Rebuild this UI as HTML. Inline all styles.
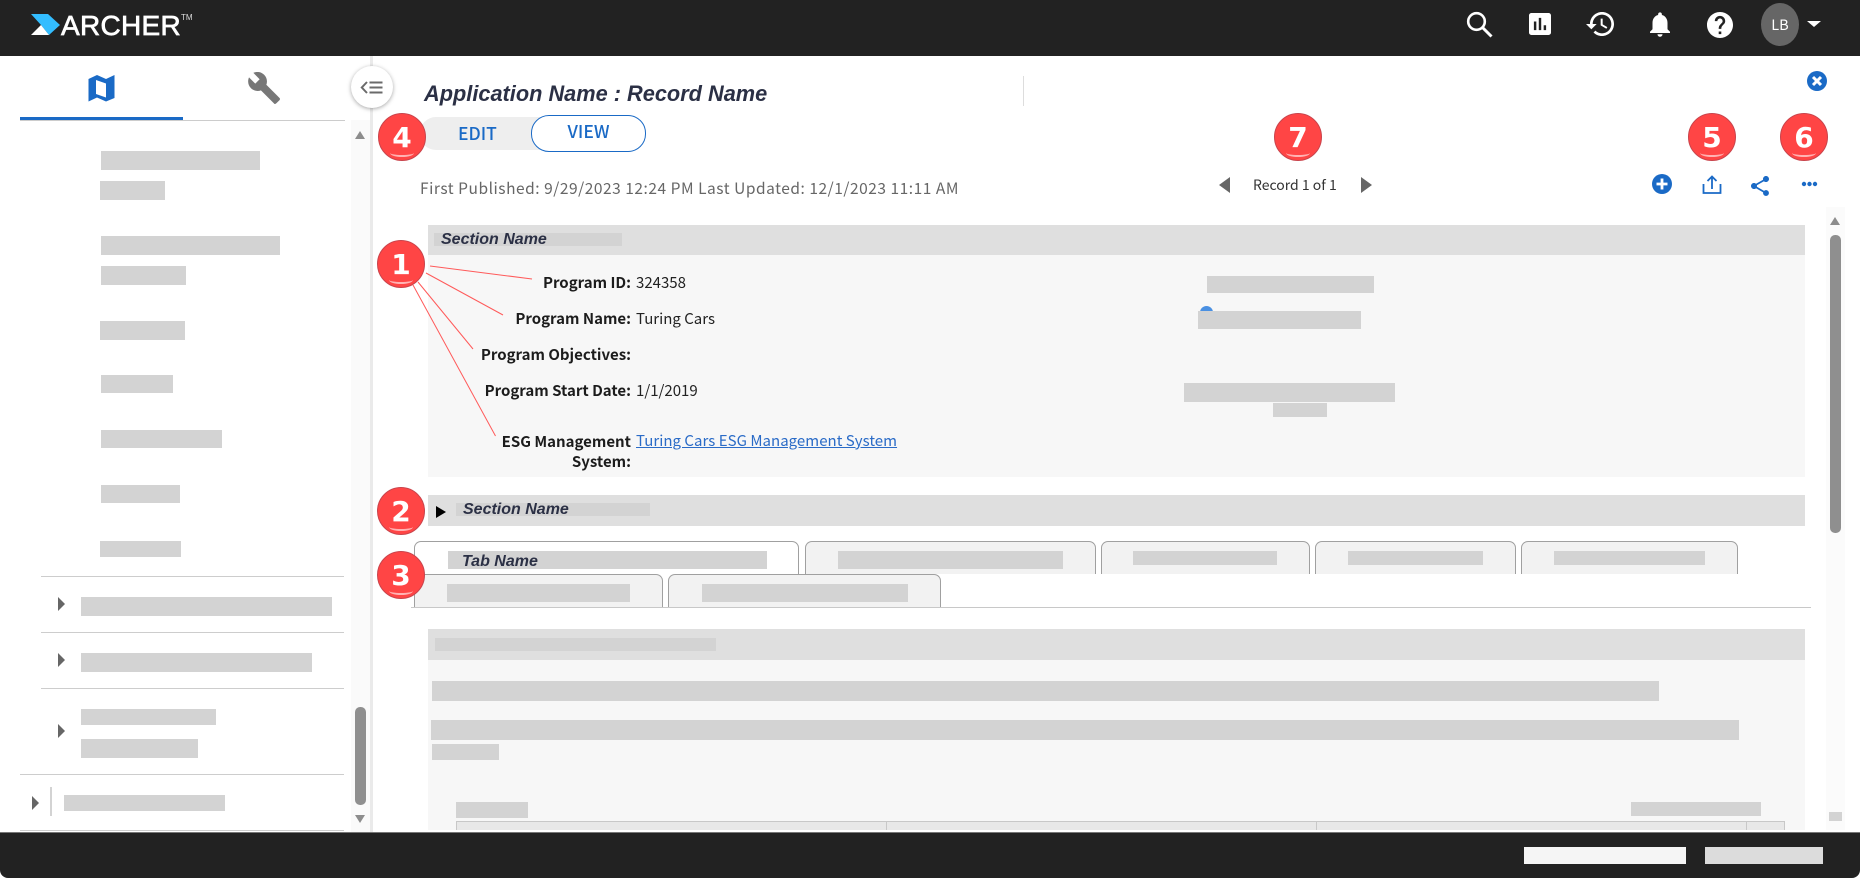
<!DOCTYPE html>
<html lang="en"><head><meta charset="utf-8"><title>Archer Record</title>
<style>
html,body{margin:0;padding:0;width:1860px;height:878px;overflow:hidden;background:#fff}
body{position:relative;font-family:"Noto Sans CJK JP","Liberation Sans",sans-serif}
div,svg,span,a{position:absolute;box-sizing:border-box}
.b{background:#d3d3d3}
.l{background:#cdcdcd;height:1px}
.sec{background:#dfdfdf;left:428px;width:1377px}
.body{background:#f7f7f7;left:428px;width:1377px}
.h{font:italic bold 16px/18px "Liberation Sans",sans-serif;color:#2b3045;white-space:nowrap}
.tab{background:#f2f2f2;border:1px solid #a0a0a0;border-bottom:0;border-radius:7px 7px 0 0}
.lab{font-weight:700;font-size:15px;line-height:20px;color:#1c1c1c;text-align:right;white-space:nowrap;right:1229px}
.val{font-size:15px;line-height:20px;color:#222;left:636px;white-space:nowrap}
.bd{width:48px;height:48px;border-radius:50%;background:#ff4545;border:1px solid #c9444c;color:#fff;font:bold 28px/48px "DejaVu Sans",sans-serif;text-align:center;overflow:hidden}
.bd:after{content:"";position:absolute;left:11px;right:11px;bottom:3px;height:6px;border-bottom:2px solid #ffb3b3;border-radius:0 0 50% 50%}
.tri{width:0;height:0}
</style></head><body>

<!-- header -->
<div style="left:0;top:0;width:1860px;height:56px;background:#222"></div>
<svg style="left:31px;top:14px" width="30" height="22" viewBox="0 0 30 22"><polygon points="0,0 17,0 29,11 18,21 10,11" fill="#33bdff"/><polygon points="10,11 18,21 0,21" fill="#fff"/></svg>
<span style="left:61px;top:10px;font:28px/32px 'Liberation Sans',sans-serif;color:#fff;white-space:nowrap;-webkit-text-stroke:.7px #fff;letter-spacing:.3px">ARCHER</span>
<span style="left:181px;top:13px;font:8px/10px 'Liberation Sans',sans-serif;color:#ddd">TM</span>

<svg style="left:1466px;top:11px" width="27" height="27" viewBox="0 0 27 27" fill="none" stroke="#fff"><circle cx="10.5" cy="10.5" r="8.3" stroke-width="2.6"/><path d="M16.5 16.5L25.5 25.5" stroke-width="3"/></svg>
<svg style="left:1529px;top:13px" width="22" height="22" viewBox="3 3 18 18" fill="#fff"><path d="M19 3H5c-1.1 0-2 .9-2 2v14c0 1.1.9 2 2 2h14c1.1 0 2-.9 2-2V5c0-1.1-.9-2-2-2zM9 17H7v-7h2v7zm4 0h-2V7h2v10zm4 0h-2v-4h2v4z"/></svg>
<svg style="left:1586px;top:11px" width="28" height="26" viewBox="1 3 21 18" fill="#fff"><path d="M13 3c-4.97 0-9 4.03-9 9H1l3.89 3.89.07.14L9 12H6c0-3.87 3.13-7 7-7s7 3.13 7 7-3.13 7-7 7c-1.93 0-3.68-.79-4.94-2.06l-1.42 1.42C8.27 19.99 10.51 21 13 21c4.97 0 9-4.03 9-9s-4.03-9-9-9zm-1 5v5l4.28 2.54.72-1.21-3.5-2.08V8H12z"/></svg>
<svg style="left:1650px;top:12px" width="20" height="25" viewBox="4 2.5 16 19.5" fill="#fff"><path d="M12 22c1.1 0 2-.9 2-2h-4c0 1.1.89 2 2 2zm6-6v-5c0-3.07-1.64-5.64-4.5-6.32V4c0-.83-.67-1.5-1.5-1.5s-1.5.67-1.5 1.5v.68C7.63 5.36 6 7.92 6 11v5l-2 2v1h16v-1l-2-2z"/></svg>
<svg style="left:1707px;top:12px" width="26" height="26" viewBox="2 2 20 20" fill="#fff"><path d="M12 2C6.48 2 2 6.48 2 12s4.48 10 10 10 10-4.48 10-10S17.52 2 12 2zm1 17h-2v-2h2v2zm2.07-7.75l-.9.92C13.45 12.9 13 13.5 13 15h-2v-.5c0-1.1.45-2.1 1.17-2.83l1.24-1.26c.37-.36.59-.86.59-1.41 0-1.1-.9-2-2-2s-2 .9-2 2H8c0-2.21 1.79-4 4-4s4 1.79 4 4c0 .88-.36 1.68-.93 2.25z"/></svg>
<div style="left:1761px;top:3px;width:38px;height:43px;border-radius:19px/21.5px;background:#666;color:#fff;font-size:14.5px;line-height:43px;text-align:center">LB</div>
<div class="tri" style="left:1807px;top:21px;border-left:7px solid transparent;border-right:7px solid transparent;border-top:6px solid #fff"></div>

<!-- sidebar -->
<div style="left:351px;top:120px;width:19px;height:713px;background:#fafafa"></div>
<div style="left:370px;top:56px;width:3px;height:777px;background:#eaeaea"></div>
<svg style="left:88px;top:74px" width="27" height="28" viewBox="0 0 27 28" fill="#1a6ac6"><path fill-rule="evenodd" d="M.5 5L9 1l9 4 8.5-4v23L18 27.500l-9-4-8.500 4zM8 6v14l10 3.500V9.500z"/></svg>
<svg style="left:248px;top:72px" width="32" height="32" viewBox="1 1 22 22" fill="#777"><path transform="matrix(-1 0 0 1 24 0) rotate(90 12 12)" d="M22.700 19l-9.100-9.100c.9-2.300.4-5-1.500-6.900-2-2-5-2.400-7.400-1.300L9 6 6 9 1.600 4.700C.4 7.100.9 10.100 2.900 12.100c1.900 1.900 4.600 2.400 6.900 1.500l9.100 9.100c.4.4 1 .4 1.400 0l2.300-2.300c.5-.4.5-1.100.1-1.400z"/></svg>
<div style="left:20px;top:120px;width:325px;height:1px;background:#ccc"></div>
<div style="left:20px;top:117px;width:163px;height:3px;background:#1a6ac6"></div>

<div class="tri" style="left:355px;top:131px;border-left:5.500px solid transparent;border-right:5.500px solid transparent;border-bottom:8px solid #8d8d8d"></div>
<div class="tri" style="left:355px;top:815px;border-left:5.500px solid transparent;border-right:5.500px solid transparent;border-top:8px solid #8d8d8d"></div>
<div style="left:355px;top:707px;width:11px;height:98px;border-radius:5px;background:#8f8f8f"></div>

<div class="b" style="left:101px;top:151px;width:159px;height:19px"></div>
<div class="b" style="left:100px;top:181px;width:65px;height:19px"></div>
<div class="b" style="left:101px;top:236px;width:179px;height:19px"></div>
<div class="b" style="left:101px;top:266px;width:85px;height:19px"></div>
<div class="b" style="left:100px;top:321px;width:85px;height:19px"></div>
<div class="b" style="left:101px;top:375px;width:72px;height:18px"></div>
<div class="b" style="left:101px;top:430px;width:121px;height:18px"></div>
<div class="b" style="left:101px;top:485px;width:79px;height:18px"></div>
<div class="b" style="left:100px;top:541px;width:81px;height:16px"></div>
<div class="l" style="left:41px;top:576px;width:303px"></div>
<div class="l" style="left:41px;top:632px;width:303px"></div>
<div class="l" style="left:41px;top:688px;width:303px"></div>
<div class="l" style="left:20px;top:774px;width:324px"></div>
<div class="l" style="left:20px;top:830px;width:324px"></div>
<div class="b" style="left:81px;top:597px;width:251px;height:19px"></div>
<div class="b" style="left:81px;top:653px;width:231px;height:19px"></div>
<div class="b" style="left:81px;top:709px;width:135px;height:16px"></div>
<div class="b" style="left:81px;top:739px;width:117px;height:19px"></div>
<div class="b" style="left:64px;top:795px;width:161px;height:16px"></div>
<div style="left:50px;top:787px;width:2px;height:29px;background:#d3d3d3"></div>
<div class="tri" style="left:58px;top:597px;border-top:7px solid transparent;border-bottom:7px solid transparent;border-left:7px solid #666"></div>
<div class="tri" style="left:58px;top:653px;border-top:7px solid transparent;border-bottom:7px solid transparent;border-left:7px solid #666"></div>
<div class="tri" style="left:58px;top:724px;border-top:7px solid transparent;border-bottom:7px solid transparent;border-left:7px solid #666"></div>
<div class="tri" style="left:32px;top:796px;border-top:7px solid transparent;border-bottom:7px solid transparent;border-left:7px solid #666"></div>

<!-- toggle -->
<div style="left:351px;top:66px;width:42px;height:42px;border-radius:50%;background:#fff;box-shadow:0 1px 4px rgba(0,0,0,.35)"></div>
<svg style="left:360px;top:80px" width="24" height="15" viewBox="0 0 24 15" fill="none" stroke="#6a6a6a" stroke-width="2"><path d="M7 2L1.800 7.500L7 13"/><path d="M9.500 2.500h13M9.500 7.500h13M9.500 12.500h13"/></svg>

<!-- title row -->
<span style="left:424px;top:81px;font:italic bold 21.750px/26px 'Liberation Sans',sans-serif;color:#2b3045;white-space:nowrap">Application Name : Record Name</span>
<div style="left:1023px;top:76px;width:1px;height:30px;background:#ddd"></div>
<svg style="left:1807px;top:71px" width="20" height="20" viewBox="0 0 20 20"><circle cx="10" cy="10" r="10" fill="#1a6ac6"/><path d="M6 6l8 8M14 6l-8 8" stroke="#fff" stroke-width="3"/></svg>

<div style="left:420px;top:117px;width:130px;height:33px;background:#eee;border-radius:16px 0 0 16px"></div>
<span style="left:458px;top:122px;font-size:17.500px;font-weight:500;line-height:24px;color:#1a6ac6">EDIT</span>
<div style="left:531px;top:115px;width:115px;height:37px;border:1.500px solid #1a6ac6;border-radius:18px;background:#fff;color:#1a6ac6;font-size:17.500px;font-weight:500;line-height:32px;text-align:center">VIEW</div>

<span style="left:420px;top:177px;font-size:15.500px;line-height:22px;color:#666;white-space:nowrap;letter-spacing:.53px">First Published: 9/29/2023 12:24 PM Last Updated: 12/1/2023 11:11 AM</span>

<div class="tri" style="left:1219px;top:177px;border-top:8px solid transparent;border-bottom:8px solid transparent;border-right:11px solid #666"></div>
<span style="left:1253px;top:175px;font-size:14px;line-height:20px;color:#333;white-space:nowrap">Record 1 of 1</span>
<div class="tri" style="left:1361px;top:177px;border-top:8px solid transparent;border-bottom:8px solid transparent;border-left:11px solid #666"></div>

<svg style="left:1652px;top:174px" width="20" height="20" viewBox="0 0 20 20"><circle cx="10" cy="10" r="10" fill="#1a6ac6"/><path d="M10 4.500v11M4.500 10h11" stroke="#fff" stroke-width="2.800"/></svg>
<svg style="left:1702px;top:175px" width="20" height="19" viewBox="0 0 20 19" fill="none" stroke="#1a6ac6" stroke-width="1.800"><path d="M1.500 9v9h17V9"/><path d="M10 14V1.500M5.500 6L10 1.500L14.500 6"/></svg>
<svg style="left:1750px;top:176px" width="20" height="20" viewBox="3 2 18 20" fill="#1a6ac6"><path d="M18 16.080c-.76 0-1.440.3-1.960.77L8.910 12.700c.05-.23.09-.46.09-.7s-.04-.47-.09-.7l7.050-4.110c.54.5 1.250.81 2.040.81 1.660 0 3-1.340 3-3s-1.340-3-3-3-3 1.340-3 3c0 .24.04.47.09.7L8.040 9.810C7.500 9.310 6.790 9 6 9c-1.660 0-3 1.340-3 3s1.340 3 3 3c.79 0 1.500-.31 2.040-.81l7.120 4.160c-.05.21-.08.43-.08.65 0 1.610 1.310 2.920 2.920 2.920s2.920-1.310 2.920-2.920-1.310-2.920-2.920-2.920z"/></svg>
<svg style="left:1801px;top:181px" width="17" height="6" viewBox="0 0 17 6" fill="#1a6ac6"><circle cx="3" cy="3" r="2.200"/><circle cx="8.500" cy="3" r="2.200"/><circle cx="14" cy="3" r="2.200"/></svg>

<!-- section 1 -->
<div class="sec" style="top:225px;height:30px"></div>
<div class="b" style="left:434px;top:233px;width:188px;height:13px"></div>
<span class="h" style="left:441px;top:231px">Section Name</span>
<div class="body" style="top:255px;height:222px"></div>
<span class="lab" style="top:273px">Program ID:</span><span class="val" style="top:273px">324358</span>
<span class="lab" style="top:309px">Program Name:</span><span class="val" style="top:309px">Turing Cars</span>
<span class="lab" style="top:345px">Program Objectives:</span>
<span class="lab" style="top:381px">Program Start Date:</span><span class="val" style="top:381px">1/1/2019</span>
<span class="lab" style="top:432px">ESG Management<br>System:</span>
<a class="val" style="top:431px;color:#2a6bc7;text-decoration:underline;letter-spacing:.03px">Turing Cars ESG Management System</a>
<div class="b" style="left:1207px;top:276px;width:167px;height:17px"></div>
<div style="left:1200px;top:306px;width:13px;height:13px;border-radius:50%;background:#4a90e2"></div>
<div class="b" style="left:1198px;top:311px;width:163px;height:18px"></div>
<div class="b" style="left:1184px;top:383px;width:211px;height:19px"></div>
<div class="b" style="left:1273px;top:403px;width:54px;height:14px"></div>

<svg style="left:0;top:0" width="600" height="500" fill="none" stroke="#ff5a5a" stroke-width="1"><path d="M430 266L532 279M426 273L503 315M418 282L473 349M413 285L495.500 436"/></svg>

<!-- section 2 -->
<div class="sec" style="top:495px;height:31px"></div>
<div class="tri" style="left:436px;top:506px;border-top:6.500px solid transparent;border-bottom:6.500px solid transparent;border-left:10px solid #000"></div>
<div class="b" style="left:456px;top:503px;width:194px;height:13px"></div>
<span class="h" style="left:463px;top:501px">Section Name</span>

<!-- tabs -->
<div class="tab" style="left:414px;top:541px;width:385px;height:33px;background:#fff"></div>
<div class="b" style="left:448px;top:551px;width:319px;height:18px"></div>
<span class="h" style="left:462px;top:553px">Tab Name</span>
<div class="tab" style="left:805px;top:541px;width:291px;height:33px"></div><div class="b" style="left:838px;top:551px;width:225px;height:18px"></div>
<div class="tab" style="left:1101px;top:541px;width:209px;height:33px"></div><div class="b" style="left:1133px;top:551px;width:144px;height:14px"></div>
<div class="tab" style="left:1315px;top:541px;width:201px;height:33px"></div><div class="b" style="left:1348px;top:551px;width:135px;height:14px"></div>
<div class="tab" style="left:1521px;top:541px;width:217px;height:33px"></div><div class="b" style="left:1554px;top:551px;width:151px;height:14px"></div>
<div class="tab" style="left:414px;top:574px;width:249px;height:33px"></div><div class="b" style="left:447px;top:584px;width:183px;height:18px"></div>
<div class="tab" style="left:668px;top:574px;width:273px;height:33px"></div><div class="b" style="left:702px;top:584px;width:206px;height:18px"></div>
<div style="left:411px;top:607px;width:1400px;height:1px;background:#c8c8c8"></div>

<!-- section 3 -->
<div class="sec" style="top:629px;height:31px"></div>
<div class="b" style="left:435px;top:638px;width:281px;height:13px"></div>
<div class="body" style="top:660px;height:170px"></div>
<div class="b" style="left:432px;top:681px;width:1227px;height:20px"></div>
<div class="b" style="left:431px;top:720px;width:1308px;height:20px"></div>
<div class="b" style="left:432px;top:744px;width:67px;height:16px"></div>
<div class="b" style="left:456px;top:802px;width:72px;height:16px"></div>
<div class="b" style="left:1631px;top:802px;width:130px;height:14px"></div>
<div style="left:456px;top:821px;width:1329px;height:9px;background:#e8e8e8;border:1px solid #c8c8c8;border-bottom:0"></div>
<div style="left:886px;top:821px;width:1px;height:9px;background:#c8c8c8"></div>
<div style="left:1316px;top:821px;width:1px;height:9px;background:#c8c8c8"></div>
<div style="left:1746px;top:821px;width:1px;height:9px;background:#c8c8c8"></div>

<!-- right scrollbar -->
<div style="left:1826px;top:207px;width:19px;height:623px;background:#fbfbfb"></div>
<div class="tri" style="left:1830px;top:217px;border-left:5.500px solid transparent;border-right:5.500px solid transparent;border-bottom:8px solid #8d8d8d"></div>
<div style="left:1830px;top:235px;width:11px;height:298px;border-radius:5px;background:#8f8f8f"></div>
<div class="b" style="left:1829px;top:812px;width:13px;height:9px"></div>

<!-- badges -->
<div class="bd" style="left:378px;top:113px">4</div>
<div class="bd" style="left:1688px;top:113px">5</div>
<div class="bd" style="left:1780px;top:113px">6</div>
<div class="bd" style="left:1274px;top:113px">7</div>
<div class="bd" style="left:377px;top:240px">1</div>
<div class="bd" style="left:377px;top:487px">2</div>
<div class="bd" style="left:377px;top:551px">3</div>

<!-- footer -->
<div style="left:0;top:832px;width:1860px;height:46px;background:#222;border-top:1px solid #777;border-radius:0 0 8px 8px"></div>
<div style="left:1524px;top:847px;width:162px;height:17px;background:#f5f5f5"></div>
<div style="left:1705px;top:847px;width:118px;height:17px;background:#dcdcdc"></div>
</body></html>
